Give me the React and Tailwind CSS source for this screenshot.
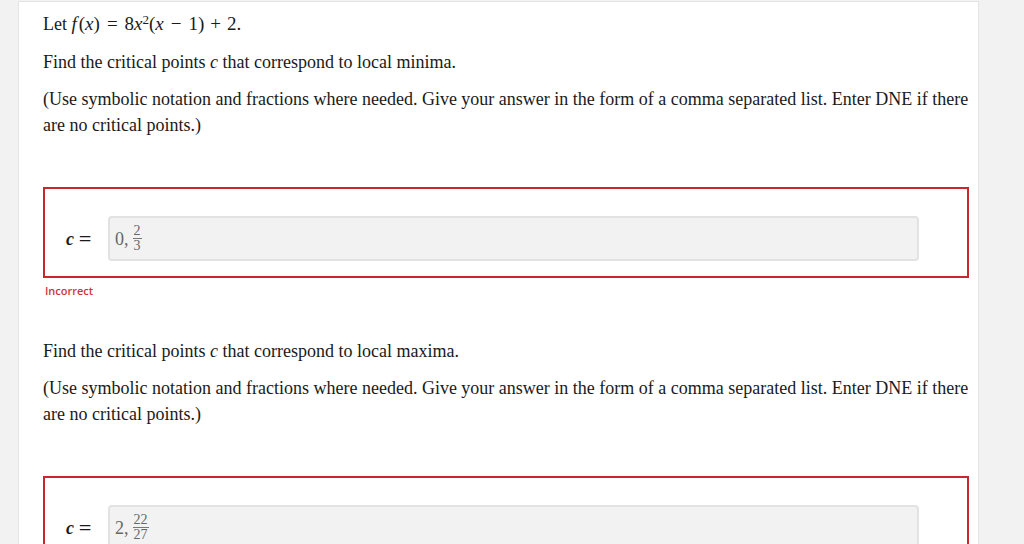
import React from "react";

const serif = { fontFamily: '"Liberation Serif", "Times New Roman", serif' };

const Frac = ({ n, d }) => (
  <span className="inline-flex flex-col items-center align-middle ml-[4px] text-[14px] leading-[12px]">
    <span className="px-[1px] pb-[1px] border-b border-[#777]">{n}</span>
    <span className="px-[1px] pt-[1px]">{d}</span>
  </span>
);

const Instructions = () => (
  <p className="mt-[11px]">
    (Use symbolic notation and fractions where needed. Give your answer in the form of a comma separated list. Enter DNE if there are no critical points.)
  </p>
);

const AnswerBox = ({ whole, n, d, status }) => (
  <div>
    <div className="mt-[49px] border-2 border-[#c7282d] pt-[27px] pb-[15px] pl-[21px] pr-[48px] flex items-center">
      <div className="w-[42px] text-[18px] font-bold flex items-center">
        <i>c</i>
        <span className="ml-[6px] scale-x-125">=</span>
      </div>
      <div className="flex-1 h-[45px] bg-[#f2f2f2] border-2 border-[#e2e2e2] rounded-[4px] flex items-center pl-[5px] text-[#666]">
        <span className="text-[18px]">{whole},</span>
        <Frac n={n} d={d} />
      </div>
    </div>
    {status && (
      <div
        className="mt-[5px] ml-[2px] text-[11px] leading-[16px] font-semibold text-[#d0343b]"
        style={{ fontFamily: '"Open Sans", "Noto Sans", sans-serif' }}
      >
        {status}
      </div>
    )}
  </div>
);

export default function App() {
  return (
    <div className="h-[544px] overflow-hidden bg-[#f2f2f2] pl-[18px] pt-px">
      <div
        className="w-[961px] min-h-[600px] bg-white border border-[#e4e4e4] pl-[24px] pr-[9px] pt-[9px] text-[18px] leading-[26px] text-[#1a1a1a]"
        style={serif}
      >
        <p>
          Let{" "}
          <span className="text-[19px]">
            <i className="mr-[2px]">f</i>(<i>x</i>)<span className="mx-[7px]">=</span>8<i>x</i>
            <sup className="text-[13px]">2</sup>(<i>x</i>
            <span className="mx-[7px]">−</span>1)<span className="mx-[6px]">+</span>2.
          </span>
        </p>
        <p className="mt-[12px]">
          Find the critical points <i>c</i> that correspond to local minima.
        </p>
        <Instructions />
        <AnswerBox whole="0" n="2" d="3" status="Incorrect" />

        <p className="mt-[39px]">
          Find the critical points <i>c</i> that correspond to local maxima.
        </p>
        <Instructions />
        <AnswerBox whole="2" n="22" d="27" />
      </div>
    </div>
  );
}
